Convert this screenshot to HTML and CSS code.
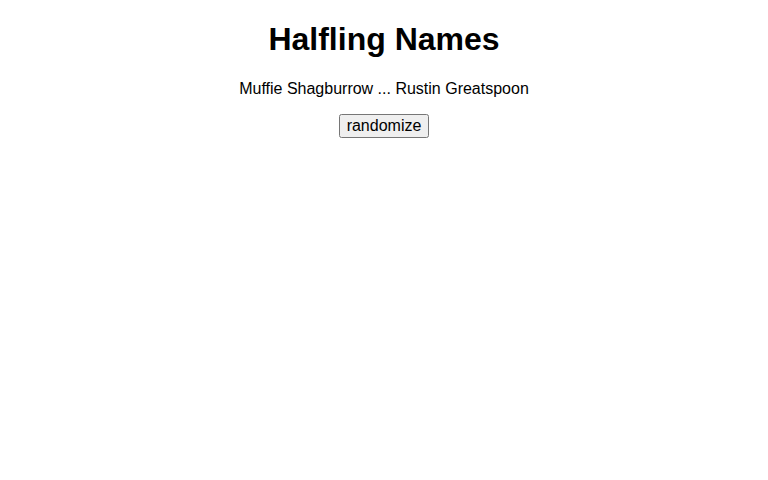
FILE: index.html
```html
<!DOCTYPE html>
<html lang="en">
<head>
  <meta charset="UTF-8">
  <meta name="viewport" content="width=device-width, initial-scale=1.0">
  <title>Halfling Names</title>
  <link rel="stylesheet" href="styles.css">
</head>
<body>

  <div class="app">
    <h1>Halfling Names</h1>
    <p id="names">Muffie Shagburrow ... Rustin Greatspoon</p>
    <div class="controls">
      <button id="randomize">randomize</button>
    </div>
  </div>

  <script>
    // Nombres y apellidos para combinar
    const first = ['Muffie', 'Rustin', 'Pip', 'Tansy', 'Wilcome', 'Daisy', 'Bungo', 'Rosie'];
    const last = ['Shagburrow', 'Greatspoon', 'Underhill', 'Brandybuck', 'Goodbody', 'Tunnelly'];

    function pick(list) {
      return list[Math.floor(Math.random() * list.length)];
    }

    document.getElementById('randomize').addEventListener('click', function() {
      document.getElementById('names').textContent =
        pick(first) + ' ' + pick(last) + ' ... ' + pick(first) + ' ' + pick(last);
    });
  </script>

</body>
</html>
```

FILE: styles.css
```css
/* Estilos generales */
body {
  font-family: 'Liberation Sans', Arial, sans-serif;
  margin: 0;
  color: #000;
  background: #fff;
}

.app {
  text-align: center;
}

.app h1 {
  font-size: 32px;
  font-weight: bold;
}

.app p {
  font-size: 16px;
}

.controls button {
  font-family: 'Liberation Sans', Arial, sans-serif;
  font-size: 16px;
}
```
